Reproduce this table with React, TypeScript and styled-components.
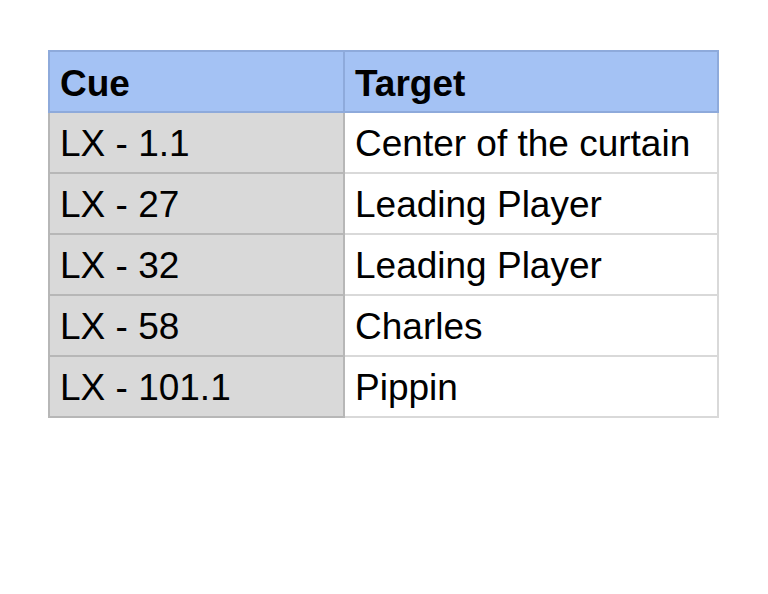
import React from "react";
import styled, { createGlobalStyle } from "styled-components";

const GlobalStyle = createGlobalStyle`
  html, body {
    margin: 0;
    padding: 0;
    background: #ffffff;
  }
  body {
    font-family: "Liberation Sans", Arial, sans-serif;
    color: #000000;
  }
`;

const Page = styled.div`
  padding: 50px 0 0 48px;
`;

const Table = styled.table`
  border-collapse: collapse;
  width: 671px;
  table-layout: fixed;
  font-family: "Liberation Sans", Arial, sans-serif;
`;

const HeadCell = styled.th`
  height: 55px;
  padding: 4px 10px 0;
  background: #a4c2f4;
  border: 2px solid #8eaadb;
  font-size: 37px;
  font-weight: bold;
  text-align: left;
  vertical-align: middle;
`;

const Cell = styled.td<{ $shade?: boolean }>`
  height: 57px;
  padding: 2px 10px 0;
  background: ${(p) => (p.$shade ? "#d9d9d9" : "#ffffff")};
  border: 2px solid ${(p) => (p.$shade ? "#b7b7b7" : "#d9d9d9")};
  font-size: 37px;
  text-align: left;
  vertical-align: middle;
  white-space: nowrap;
`;

const rows = [
  { cue: "LX - 1.1", target: "Center of the curtain" },
  { cue: "LX - 27", target: "Leading Player" },
  { cue: "LX - 32", target: "Leading Player" },
  { cue: "LX - 58", target: "Charles" },
  { cue: "LX - 101.1", target: "Pippin" },
];

export default function App() {
  return (
    <>
      <GlobalStyle />
      <Page>
        <Table>
          <colgroup>
            <col style={{ width: 295 }} />
            <col />
          </colgroup>
          <thead>
            <tr>
              <HeadCell>Cue</HeadCell>
              <HeadCell>Target</HeadCell>
            </tr>
          </thead>
          <tbody>
            {rows.map((r) => (
              <tr key={r.cue}>
                <Cell $shade>{r.cue}</Cell>
                <Cell>{r.target}</Cell>
              </tr>
            ))}
          </tbody>
        </Table>
      </Page>
    </>
  );
}
